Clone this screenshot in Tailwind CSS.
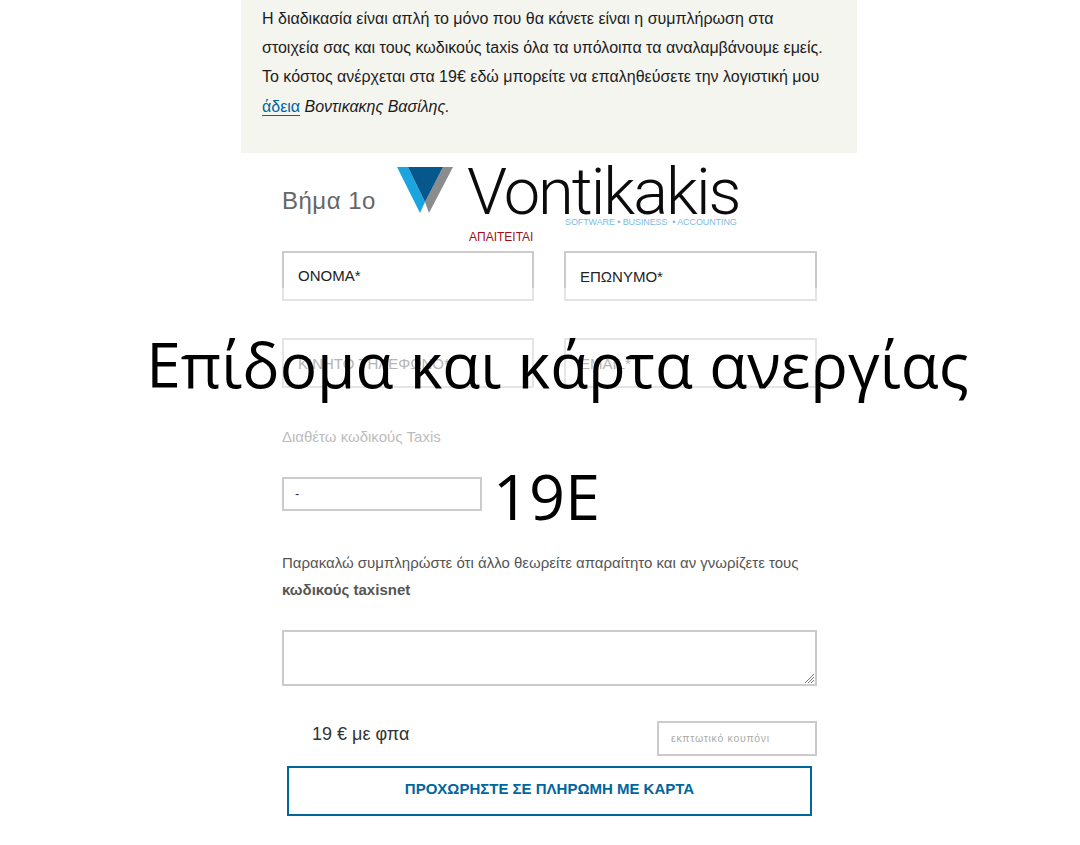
<!DOCTYPE html>
<html lang="el">
<head>
<meta charset="utf-8">
<title>Επίδομα και κάρτα ανεργίας</title>
<script src="https://cdn.jsdelivr.net/npm/@tailwindcss/browser@4"></script>
</head>
<body class="bg-white font-['Liberation_Sans',Arial,sans-serif]">
<div class="relative w-[1080px] h-[845px] overflow-hidden">
  <div class="ml-[241px] w-[616px]">
    <div class="h-[153px] bg-[#f5f5f0] pl-[21px] pr-2 pt-[4px] text-[16px] leading-[29.2px] text-[#1c1c1c]">
      <p>Η διαδικασία είναι απλή το μόνο που θα κάνετε είναι η συμπλήρωση στα<br>στοιχεία σας και τους κωδικούς taxis όλα τα υπόλοιπα τα αναλαμβάνουμε εμείς.<br>Το κόστος ανέρχεται στα 19€ εδώ μπορείτε να επαληθεύσετε την λογιστική μου<br><a class="border-b border-[#00669e] text-[#00669e]">άδεια</a> <em>Βοντικακης Βασίλης.</em></p>
    </div>
    <div class="pl-[41px] pr-[40px]">
      <div class="flex h-[78px] items-start">
        <div class="mt-[33px] w-[115px] text-[24px] leading-[30px] tracking-[0.5px] text-[#666]">Βήμα 1ο</div>
        <div class="relative h-[78px] w-[350px]">
          <svg class="absolute left-0 top-[14px]" width="57" height="47" viewBox="0 0 57 47">
            <polygon points="0,0 11,0 28,35 23,46" fill="#1ba5e0"/>
            <polygon points="56,0 46,0 28,35 32,46" fill="#8a8c8e"/>
            <polygon points="11,0 46,0 28,35" fill="#05578c"/>
          </svg>
          <div class="absolute left-[70px] top-[3px] font-['Roboto',sans-serif] text-[65px] font-light leading-[60px] mt-[6px] tracking-[-2px] text-[#0b0b0b]">Vontikakis</div>
          <div class="absolute left-[168px] top-[64px] whitespace-nowrap text-[9px] leading-[10px] tracking-[-0.1px] text-[#7dbbe4]">SOFTWARE • BUSINESS &nbsp;• ACCOUNTING</div>
        </div>
      </div>
      <div class="h-[20px] pl-[187px] text-[12px] leading-[12px] text-[#a50f14]">ΑΠΑΙΤΕΙΤΑΙ</div>
      <div class="flex justify-between">
        <div class="relative box-border h-[50px] w-[252px] border-2 border-[#e3e3e3] pl-[14px] pt-[13px] text-[15px] leading-[20px] text-[#222] before:absolute before:-left-0.5 before:-top-0.5 before:h-[37px] before:w-[252px] before:border-2 before:border-b-0 before:border-[#cbcbcb] before:content-['']">ΟΝΟΜΑ*</div>
        <div class="relative box-border h-[50px] w-[253px] border-2 border-[#e3e3e3] pl-[14px] pt-[14px] text-[15px] leading-[20px] text-[#222] before:absolute before:-left-0.5 before:-top-0.5 before:h-[37px] before:w-[253px] before:border-2 before:border-b-0 before:border-[#cbcbcb] before:content-['']">ΕΠΩΝΥΜΟ*</div>
      </div>
      <div class="mt-[37px] flex justify-between">
        <div class="box-border h-[50px] w-[252px] border-2 border-[#e5e5e5] pl-[14px] pt-[14px] text-[15px] leading-[20px] text-[#b5b5b5]">ΚΙΝΗΤΟ ΤΗΛΕΦΩΝΟ*</div>
        <div class="box-border h-[50px] w-[253px] border-2 border-[#e5e5e5] pl-[14px] pt-[14px] text-[15px] leading-[20px] text-[#b5b5b5]">EMAIL*</div>
      </div>
      <div class="mt-[40px] text-[15px] leading-[18px] text-[#bcbcbc]">Διαθέτω κωδικούς Taxis</div>
      <div class="mt-[23px] flex h-[50px] items-center">
        <div class="box-border flex h-[34px] w-[200px] items-center border-2 border-[#cbcbcb] pl-[11px] text-[13px] text-[#333]">-</div>
        <div class="ml-[11px] mt-[4px] font-['Open_Sans',sans-serif] text-[63px] leading-[50px] text-black">19E</div>
      </div>
      <p class="mt-[30px] text-[15px] leading-[27px] text-[#555]">Παρακαλώ συμπληρώστε ότι άλλο θεωρείτε απαραίτητο και αν γνωρίζετε τους<br><strong>κωδικούς taxisnet</strong></p>
      <div class="relative mt-[27px] box-border h-[56px] w-[535px] border-2 border-[#cbcbcb]">
        <svg class="absolute bottom-0 right-0" width="11" height="11" viewBox="0 0 11 11" stroke="#777" stroke-width="1"><path d="M1 10 10 1M4 10 10 4M7 10 10 7"/></svg>
      </div>
      <div class="mt-[35px] flex h-[35px] items-start justify-between">
        <div class="pl-[30px] pt-[2px] text-[18px] leading-[22px] text-[#333]">19 € με φπα</div>
        <div class="box-border flex h-[35px] w-[160px] items-center border-2 border-[#cbcbcb] pl-[12px] text-[10.5px] tracking-[0.7px] text-[#aaa]">εκπτωτικό κουπόνι</div>
      </div>
      <div class="mx-[5px] mt-[10px] box-border flex h-[50px] w-[525px] items-center justify-center border-2 border-[#00669e] pb-[3px] text-[15px] font-bold text-[#00669e]">ΠΡΟΧΩΡΗΣΤΕ ΣΕ ΠΛΗΡΩΜΗ ΜΕ ΚΑΡΤΑ</div>
    </div>
  </div>
  <h1 class="absolute left-0 top-[319px] w-[1115px] text-center font-['Open_Sans',sans-serif] text-[62.2px] leading-[90px] font-normal text-black">Επίδομα και κάρτα ανεργίας</h1>
</div>
</body>
</html>
